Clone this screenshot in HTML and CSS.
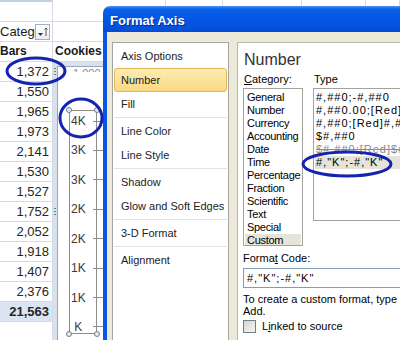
FILE: index.html
```html
<!DOCTYPE html>
<html>
<head>
<meta charset="utf-8">
<link rel="stylesheet" href="styles.css">
</head>
<body>
<div class="sheet">
  <div class="row top"><div class="cell ca"></div><div class="cell cb"></div><div class="cell cc"></div><div class="cell cd"></div><div class="cell ce"></div><div class="cell cf"></div></div>
  <div class="row"><div class="cell ca cat"><span class="cat-text">Category</span><span class="filter"><svg width="13" height="14" viewBox="0 0 13 14"><path d="M2 8h5l-2.5 3z" fill="#333"/><path d="M10 3v8M8.5 4.5L10 3l1.5 1.5" stroke="#555" stroke-width="1" fill="none"/></svg></span></div><div class="cell cb"></div><div class="cell cc"></div><div class="cell cd"></div><div class="cell ce"></div><div class="cell cf"></div></div>
  <div class="row"><div class="cell ca hdr">Bars</div><div class="cell cb hdr hb">Cookies</div><div class="cell cc"></div><div class="cell cd"></div><div class="cell ce"></div><div class="cell cf"></div></div>
  <div class="row"><div class="cell ca num">1,372</div><div class="cell cb"></div></div>
  <div class="row"><div class="cell ca num">1,550</div><div class="cell cb"></div></div>
  <div class="row"><div class="cell ca num">1,965</div><div class="cell cb"></div></div>
  <div class="row"><div class="cell ca num">1,973</div><div class="cell cb"></div></div>
  <div class="row"><div class="cell ca num">2,141</div><div class="cell cb"></div></div>
  <div class="row"><div class="cell ca num">1,530</div><div class="cell cb"></div></div>
  <div class="row"><div class="cell ca num">1,527</div><div class="cell cb"></div></div>
  <div class="row"><div class="cell ca num">1,752</div><div class="cell cb"></div></div>
  <div class="row"><div class="cell ca num">2,052</div><div class="cell cb"></div></div>
  <div class="row"><div class="cell ca num">1,918</div><div class="cell cb"></div></div>
  <div class="row"><div class="cell ca num">1,407</div><div class="cell cb"></div></div>
  <div class="row"><div class="cell ca num">2,376</div><div class="cell cb"></div></div>
  <div class="row total"><div class="cell ca num">21,563</div><div class="cell cb"></div></div>
  <div class="row"><div class="cell ca"></div><div class="cell cb"></div></div>
</div>

<div class="chart">
  <span class="grip g1"></span><span class="grip g2"></span>
  <div class="chart-in">
    <div class="cut">1,000</div>
    <div class="axis">
      <span class="hd h-tl"></span><span class="hd h-tr"></span><span class="hd h-bl"></span><span class="hd h-br"></span>
      <div class="lbl"><span>4K</span><i class="tick"></i></div>
      <div class="lbl"><span>3K</span><i class="tick"></i></div>
      <div class="lbl"><span>3K</span><i class="tick"></i></div>
      <div class="lbl"><span>2K</span><i class="tick"></i></div>
      <div class="lbl"><span>2K</span><i class="tick"></i></div>
      <div class="lbl"><span>1K</span><i class="tick"></i></div>
      <div class="lbl"><span>1K</span><i class="tick"></i></div>
      <div class="lbl"><span>&nbsp;K</span><i class="tick"></i></div>
    </div>
  </div>
</div>

<div class="dlg">
  <div class="title">Format Axis</div>
  <div class="dbody">
    <div class="nav">
      <div class="nav-item">Axis Options</div>
      <div class="nav-item sel">Number</div>
      <div class="nav-item">Fill</div>
      <div class="nav-sep"></div>
      <div class="nav-item">Line Color</div>
      <div class="nav-item">Line Style</div>
      <div class="nav-sep"></div>
      <div class="nav-item">Shadow</div>
      <div class="nav-item">Glow and Soft Edges</div>
      <div class="nav-sep"></div>
      <div class="nav-item">3-D Format</div>
      <div class="nav-sep"></div>
      <div class="nav-item">Alignment</div>
    </div>
    <div class="panel">
      <div class="ph">Number</div>
      <div class="cols">
        <div class="catcol">
          <div class="lab"><u>C</u>ategory:</div>
          <div class="list catlist">
            <div class="li">General</div>
            <div class="li">Number</div>
            <div class="li">Currency</div>
            <div class="li">Accounting</div>
            <div class="li">Date</div>
            <div class="li">Time</div>
            <div class="li">Percentage</div>
            <div class="li">Fraction</div>
            <div class="li">Scientific</div>
            <div class="li">Text</div>
            <div class="li">Special</div>
            <div class="li sel">Custom</div>
          </div>
        </div>
        <div class="typecol">
          <div class="lab">Type</div>
          <div class="list typelist">
            <div class="li">#,##0;-#,##0</div>
            <div class="li">#,##0.00;[Red]-#,##0.00</div>
            <div class="li">#,##0;[Red]#,##0</div>
            <div class="li">$#,##0</div>
            <div class="li faded">$#,##0;[Red]$#,##0</div>
            <div class="li sel">#,"K";-#,"K"</div>
          </div>
        </div>
      </div>
      <div class="fc">Forma<u>t</u> Code:</div>
      <div class="input">#,"K";-#,"K"</div>
      <div class="help">To create a custom format, type the format code and then click Add.</div>
      <div class="help2">Add.</div>
      <div class="chkrow"><span class="chk"></span><span>L<u>i</u>nked to source</span></div>
    </div>
  </div>
</div>

<svg class="marks" width="400" height="340" viewBox="0 0 400 340">
  <ellipse cx="36" cy="71" rx="29" ry="13" fill="none" stroke="#1424b0" stroke-width="3"/>
  <ellipse cx="81" cy="118" rx="21" ry="19" fill="none" stroke="#1424b0" stroke-width="3"/>
  <ellipse cx="347" cy="164" rx="44" ry="12" fill="none" stroke="#1424b0" stroke-width="3"/>
</svg>
</body>
</html>
```

FILE: styles.css
```css
* { box-sizing: border-box; margin: 0; padding: 0; }
html, body { width: 400px; height: 340px; overflow: hidden; }
body {
  position: relative;
  background: #fff;
  font-family: "Liberation Sans", Arial, sans-serif;
  color: #1a1a1a;
}

/* spreadsheet */
.sheet { display: flex; flex-direction: column; }
.row { display: flex; height: 20px; flex: none; }
.row.top { height: 22px; }
.cell {
  height: 100%;
  flex: none;
  border-right: 1px solid #d5dbe5;
  border-bottom: 1px solid #d5dbe5;
}
.ca { width: 53px; }
.cb { width: 113px; }
.cc { width: 57px; }
.cd { width: 79px; }
.ce { width: 64px; }
.cf { flex: 1; }
.top .ca { border-top: 2px solid #c3d0e2; }
.cat { display: flex; align-items: center; overflow: hidden; }
.cat-text { flex: 1; min-width: 0; overflow: hidden; white-space: nowrap; font-size: 13px; }
.filter {
  flex: none;
  width: 15px;
  height: 16px;
  margin-right: 2px;
  border: 1px solid #a4b0c0;
  background: linear-gradient(#ffffff, #e8edf4);
  display: flex;
}
.hdr { font-size: 12px; font-weight: bold; line-height: 19px; white-space: nowrap; overflow: hidden; }
.hb { padding-left: 2px; }
.num { font-size: 13px; text-align: right; padding-right: 3px; line-height: 19px; color: #262626; }
.total .ca { background: #dbe5f1; font-weight: bold; }

/* chart object */
.chart {
  position: absolute;
  left: 53px;
  top: 62px;
  width: 70px;
  height: 290px;
  background: #d8e2ef;
  padding: 4px 0 0 4px;
}
.grip {
  position: absolute;
  left: 1px;
  width: 2px;
  height: 9px;
  background: repeating-linear-gradient(#6b7b90 0 1px, transparent 1px 3px);
}
.g1 { top: 6px; }
.g2 { top: 146px; }
.chart-in {
  height: 100%;
  background: #fff;
  border-left: 1px solid #9aa6b6;
  border-top: 1px solid #9aa6b6;
  padding-left: 11px;
}
.cut {
  height: 5px;
  overflow: hidden;
  font-size: 11px;
  line-height: 13px;
  color: #888;
  padding-left: 4px;
}
.axis {
  position: relative;
  width: 28px;
  height: 224px;
  margin-top: 38px;
  border: 1px solid #8c8c8c;
  display: flex;
  flex-direction: column;
  justify-content: space-between;
  padding-top: 4px;
}
.hd {
  position: absolute;
  width: 6px;
  height: 6px;
  border-radius: 50%;
  border: 1px solid #6f7f96;
  background: #e2e9f3;
}
.h-tl { top: -4px; left: -4px; }
.h-tr { top: -4px; right: -4px; }
.h-bl { bottom: -4px; left: -4px; }
.h-br { bottom: -4px; right: -4px; }
.lbl {
  display: flex;
  align-items: center;
  height: 12px;
  margin-right: -7px;
  padding-left: 1px;
  font-size: 12px;
  line-height: 12px;
  color: #3a3a3a;
}
.tick { margin-left: auto; width: 10px; height: 1px; background: #8c8c8c; }

/* dialog */
.dlg {
  position: absolute;
  left: 103px;
  top: 6px;
  width: 300px;
  height: 340px;
  display: flex;
  flex-direction: column;
}
.title {
  height: 26px;
  flex: none;
  border-radius: 7px 0 0 0;
  background: linear-gradient(#4a94f8 0, #0c5fe8 3px, #0558e6 10px, #0453df 20px, #044bd2 26px);
  color: #fff;
  font-weight: bold;
  font-size: 13px;
  line-height: 22px;
  padding: 4px 0 0 7px;
  text-shadow: 1px 1px 0 #0a2a8a;
}
.dbody {
  flex: 1;
  background: #ece9d8;
  border-left: 4px solid #0b55e0;
  display: flex;
  gap: 8px;
  padding: 10px 0 0 5px;
}
.nav {
  width: 117px;
  flex: none;
  background: #fff;
  border: 1px solid #a5a5a5;
  padding-top: 1px;
  font-size: 11px;
  color: #222;
}
.nav-item {
  height: 24px;
  line-height: 22px;
  margin: 0 1px;
  padding-left: 6px;
  border: 1px solid transparent;
  border-radius: 3px;
  white-space: nowrap;
}
.nav-item.sel {
  background: linear-gradient(#fdebb2, #fcd984);
  border-color: #e3b658;
}
.nav-sep { height: 1px; background: #e2e2e2; margin: 1px 1px; }

.panel {
  flex: 1;
  min-width: 0;
  background: #fff;
  border: 1px solid #b9b7ab;
  border-right: none;
  padding: 7px 0 0 5px;
  font-size: 11px;
  color: #000;
  overflow: hidden;
}
.ph { font-size: 16px; line-height: 20px; color: #333; padding-left: 1px; }
.cols { display: flex; gap: 10px; }
.lab { line-height: 13px; margin: 3px 0 2px; padding-left: 1px; }
.catcol { width: 60px; flex: none; }
.typecol { flex: 1; min-width: 0; }
.list { border: 1px solid #a3a29c; background: #fff; overflow: hidden; padding-top: 2px; }
.catlist { height: 158px; letter-spacing: -0.3px; }
.typelist { height: 133px; border-right: none; letter-spacing: 1px; }
.li { line-height: 13px; margin: 0 1px; padding-left: 2px; white-space: nowrap; overflow: hidden; }
.typelist .li { padding-left: 1px; margin-right: 0; }
.li.sel { background: #e6e3d8; }
.li.faded { color: #8a8a8a; text-decoration: line-through; }
.fc { line-height: 13px; margin-top: 6px; }
.input {
  margin-top: 3px;
  height: 20px;
  border: 1px solid #7f9db9;
  border-right: none;
  line-height: 18px;
  padding-left: 3px;
  letter-spacing: 1px;
  white-space: nowrap;
}
.help { line-height: 12px; margin-top: 5px; white-space: nowrap; overflow: hidden; height: 12px; }
.help2 { line-height: 12px; }
.chkrow { display: flex; align-items: center; gap: 6px; margin-top: 3px; line-height: 13px; }
.chk {
  width: 13px;
  height: 13px;
  flex: none;
  border: 1px solid #6f7f8f;
  background: linear-gradient(135deg, #d6d4cc, #f6f6f3);
}

.marks { position: absolute; left: 0; top: 0; pointer-events: none; }
```
